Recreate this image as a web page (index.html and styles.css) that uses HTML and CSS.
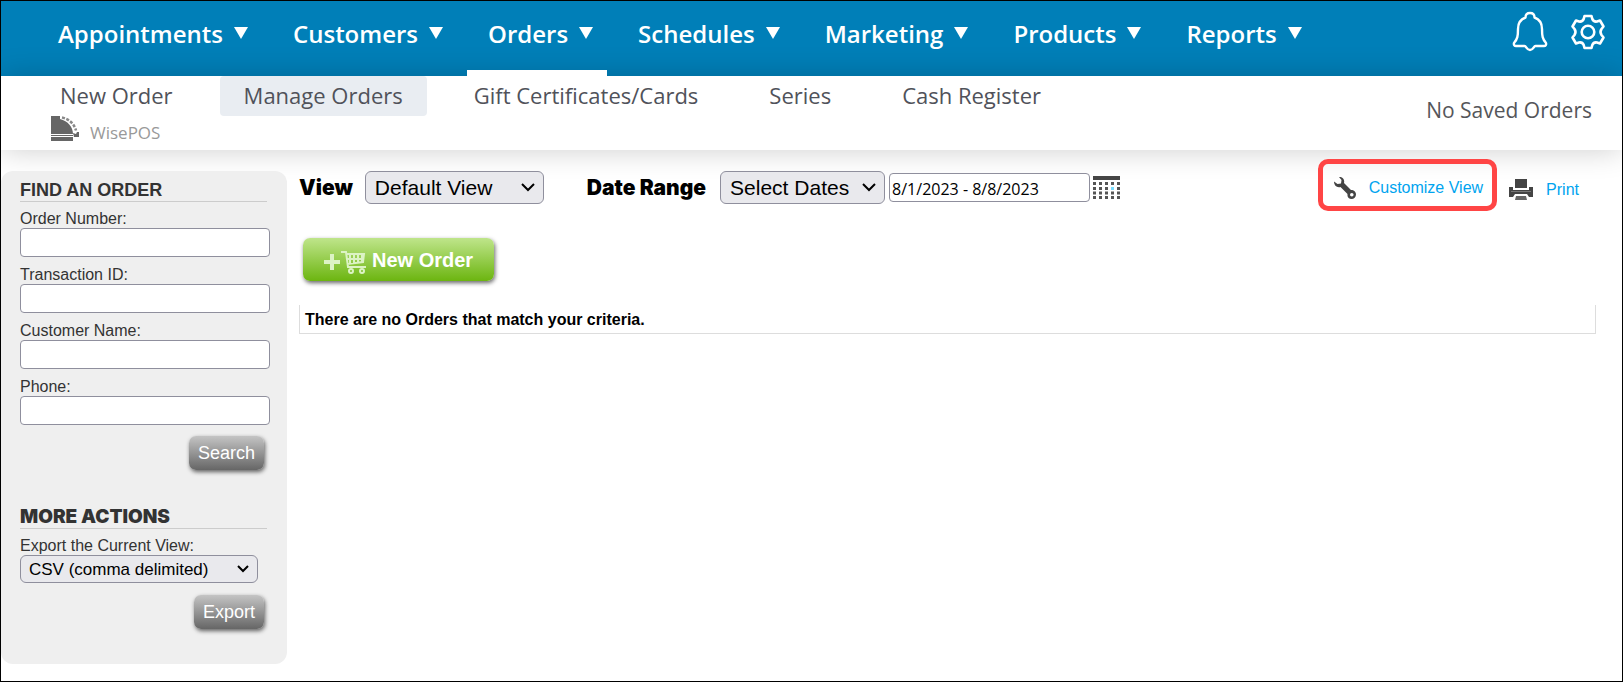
FILE: index.html
```html
<!doctype html>
<html lang="en">
<head>
    <meta charset="UTF-8">
    <title>Manage Orders</title>
    <link rel="stylesheet" href="styles.css">
</head>
<body>
<nav class="main-nav">
    <ul class="menu">
        <li><a href="#">Appointments <span class="arrow"></span></a></li>
        <li><a href="#">Customers <span class="arrow"></span></a></li>
        <li class="active"><a href="#">Orders <span class="arrow"></span></a></li>
        <li><a href="#">Schedules <span class="arrow"></span></a></li>
        <li><a href="#">Marketing <span class="arrow"></span></a></li>
        <li><a href="#">Products <span class="arrow"></span></a></li>
        <li><a href="#">Reports <span class="arrow"></span></a></li>
    </ul>
    <div class="nav-icons">
        <button type="button" aria-label="Notifications">
            <svg width="36" height="42" viewBox="0 0 36 42" fill="none" stroke="#fff" stroke-width="2.4" stroke-linejoin="round" stroke-linecap="round">
                <path d="M13.5 6.5C13.500 3.500 15 2 18 2s4.500 1.500 4.500 4.500C28 8.500 30 13 30 18c0 7 .5 10 4 14 .5 2-.5 3-2 3h-8.500c-2 0-2 4-5.500 4s-3.500-4-5.500-4H4c-1.500 0-2.500-1-2-3 3.500-4 4-7 4-14 0-5 2-9.500 7.500-11.500z"/>
            </svg>
        </button>
        <button type="button" aria-label="Settings">
            <svg width="36" height="36" viewBox="0 0 36 36" fill="none" stroke="#fff" stroke-width="2.6" stroke-linejoin="round">
                <path d="M14.500 2h7l.8 3Q23.500 8 27 7.500l3-1 3.500 6-2 2.500q-2 3 0 6l2 2.500-3.500 6-3-1q-3.500-.5-4.700 2.500l-.8 3h-7l-.8-3Q12.500 28 9 28.500l-3 1-3.500-6 2-2.500q2-3 0-6l-2-2.500 3.500-6 3 1Q12.500 8 13.700 5z"/>
                <circle cx="18" cy="18" r="6.300"/>
            </svg>
        </button>
    </div>
</nav>

<header class="sub-nav">
    <div>
        <ul class="sub-menu">
            <li><a href="#">New Order</a></li>
            <li><a href="#" class="current">Manage Orders</a></li>
            <li><a href="#">Gift Certificates/Cards</a></li>
            <li><a href="#">Series</a></li>
            <li><a href="#">Cash Register</a></li>
        </ul>
        <div class="wisepos">
            <svg width="29" height="26" viewBox="0 0 29 26" fill="#666">
                <path d="M0 0h9v3c8 2 13 8 13 15H0z"/>
                <path d="M11 1.500c7 1.500 12 6 14 13" fill="none" stroke="#888" stroke-width="2.500" stroke-dasharray="3 1.500"/>
                <path d="M0 19h22v1H0zM0 21h22v4H0zM22 17l3 1 1-2h2v5h-5z"/>
            </svg>
            <span>WisePOS</span>
        </div>
    </div>
    <div class="saved-orders">No Saved Orders</div>
</header>

<main class="page">
    <aside class="sidebar">
        <form>
            <h2>FIND AN ORDER</h2>
            <label for="orderNumber">Order Number:</label>
            <input id="orderNumber" type="text">
            <label for="transactionId">Transaction ID:</label>
            <input id="transactionId" type="text">
            <label for="customerName">Customer Name:</label>
            <input id="customerName" type="text">
            <label for="phone">Phone:</label>
            <input id="phone" type="text">
            <button type="button" class="grey-btn">Search</button>
        </form>
        <form class="more-actions">
            <h2 class="heavy">MORE ACTIONS</h2>
            <label for="exportType">Export the Current View:</label>
            <div class="select-box small">
                <select id="exportType">
                    <option>CSV (comma delimited)</option>
                </select>
                <svg width="12" height="8" viewBox="0 0 12 8" fill="none" stroke="#000" stroke-width="2"><path d="M1 1l5 5 5-5"/></svg>
            </div>
            <button type="button" class="grey-btn">Export</button>
        </form>
    </aside>

    <section class="content">
        <div class="toolbar">
            <label for="view" class="heavy">View</label>
            <div class="select-box view-select">
                <select id="view">
                    <option>Default View</option>
                </select>
                <svg width="14" height="9" viewBox="0 0 14 9" fill="none" stroke="#000" stroke-width="2"><path d="M1 1l6 6 6-6"/></svg>
            </div>
            <label for="dates" class="heavy date-label">Date Range</label>
            <div class="select-box date-select">
                <select id="dates">
                    <option>Select Dates</option>
                </select>
                <svg width="14" height="9" viewBox="0 0 14 9" fill="none" stroke="#000" stroke-width="2"><path d="M1 1l6 6 6-6"/></svg>
            </div>
            <input class="date-input" type="text" value="8/1/2023 - 8/8/2023" aria-label="Dates">
            <button type="button" class="calendar" aria-label="Open calendar">
                <svg width="28" height="24" viewBox="0 0 28 24">
                    <path d="M0 0h27v4H0z" fill="#444"/>
                    <path d="M0 7.500h28M0 12.500h28M0 17h28M0 21.500h28" stroke="#555" stroke-width="3" stroke-dasharray="3 3"/>
                    <path d="M18 11h3v3h-3z" fill="#7df"/>
                </svg>
            </button>
            <div class="tools">
                <a href="#" class="customize">
                    <svg width="22" height="22" viewBox="0 0 22 22">
                        <path d="M5 0c3-.5 6 2 5 6l7 7c3 0 5 2 5 4.500S20 22 17.500 22 13 20 13.500 17L6.500 10C3 11 0 8.500 0 4.500L3.500 7 7 6.500 7.500 3z" fill="#444"/>
                        <circle cx="17.800" cy="17.700" r="1.800" fill="#fff"/>
                    </svg>
                    Customize View
                </a>
                <a href="#" class="print">
                    <svg width="24" height="22" viewBox="0 0 24 22" fill="#444">
                        <path d="M6 0h12v9H6z"/>
                        <path d="M0 8h4v3h16V8h4v10h-4l-2-3H6l-2 3H0z"/>
                        <path d="M7 17h10l1 4H6z" fill="#666"/>
                        <path d="M2 12h20v1H2z" fill="#777"/>
                    </svg>
                    Print
                </a>
            </div>
        </div>

        <button type="button" class="new-order">
            <svg width="44" height="28" viewBox="0 -4 44 28" fill="none" stroke="#dcf3c4" stroke-width="2">
                <path d="M1 12h16M9 4v16" stroke-width="4"/>
                <path d="M18 2h5l2 15h18M23 4h18l-1 8-16 2M27 4v9M31 4v9M35 4v8M39 4v8M24 9h16"/>
                <circle cx="28" cy="21" r="2"/>
                <circle cx="39" cy="21" r="2"/>
            </svg>
            New Order
        </button>

        <table class="orders">
            <tr>
                <td>There are no Orders that match your criteria.</td>
            </tr>
        </table>
    </section>
</main>
</body>
</html>
```
FILE: styles.css
```css
* {
    box-sizing: border-box;
}

body {
    margin: 0;
    min-height: 100vh;
    border: 1px solid #000;
    font-family: "Liberation Sans", Arial, sans-serif;
    font-size: 16px;
    background-color: #fff;
}

ul {
    margin: 0;
    padding: 0;
    list-style: none;
}

a {
    text-decoration: none;
}

button {
    border: none;
    cursor: pointer;
    font-family: inherit;
}

svg {
    display: block;
    flex: none;
}

.main-nav {
    display: flex;
    justify-content: space-between;
    height: 75px;
    padding: 0 16px 0 36px;
    background-color: #007fb8;
    font-family: "Open Sans", sans-serif;
}

.menu {
    display: flex;
    gap: 10px;
}

.menu li {
    padding: 0 14px 5px 21px;
    border-bottom: 6px solid transparent;
}

.menu .active {
    border-bottom-color: #fff;
}

.menu a {
    display: flex;
    align-items: center;
    gap: 11px;
    height: 64px;
    color: #fff;
    font-size: 24px;
    font-weight: 600;
}

.arrow {
    border: 7px solid transparent;
    border-top: 12px solid #fff;
    border-bottom: 0;
}

.nav-icons {
    display: flex;
    gap: 22px;
    height: 62px;
    align-items: center;
}

.nav-icons button {
    padding: 0;
    background: none;
}

.sub-nav {
    display: flex;
    justify-content: space-between;
    height: 74px;
    padding: 0 30px 0 35px;
    background-color: #fff;
    box-shadow: 0 0 30px rgba(0, 0, 0, 0.2);
    font-family: "Open Sans", sans-serif;
    color: #55565a;
}

.main-nav, .sub-nav {
    white-space: nowrap;
}

.sub-menu {
    display: flex;
    gap: 23px;
}

.sub-menu a {
    display: block;
    padding: 0 24px 2px;
    border-radius: 4px;
    font-size: 22px;
    font-weight: 500;
    line-height: 38px;
    color: #50525a;
}

.sub-menu .current {
    background-color: #e9edf2;
}

.wisepos {
    display: flex;
    gap: 10px;
    padding-left: 15px;
    font-size: 17px;
    line-height: 34px;
    color: #999;
}

.saved-orders {
    font-size: 21px;
    line-height: 69px;
}

.page {
    display: flex;
    gap: 12px;
    padding: 21px 26px 17px 0;
}

.sidebar {
    flex: none;
    width: 286px;
    padding: 8px 17px 35px 19px;
    border-radius: 12px;
    background-color: #efefef;
    color: #333;
}

.sidebar form {
    display: flex;
    flex-direction: column;
}

.sidebar h2 {
    margin: 0 3px 8px 0;
    border-bottom: 1px solid #ccc;
    font-size: 18px;
    line-height: 22px;
}

.sidebar label {
    font-size: 16px;
    line-height: 18px;
}

.sidebar input {
    height: 29px;
    margin-bottom: 9px;
}

input, select {
    border: 1px solid #8f8f9d;
    border-radius: 4px;
    background-color: #fff;
    color: #000;
}

.grey-btn {
    align-self: flex-end;
    height: 34px;
    margin: 2px 6px 0 0;
    padding: 0 9px;
    border-radius: 7px;
    background: linear-gradient(#c4c4c4, #666);
    box-shadow: 1px 2px 4px rgba(0, 0, 0, 0.6);
    color: #fff;
    font-size: 18px;
}

.sidebar .more-actions {
    margin-top: 36px;
}

.heavy, .sidebar .heavy {
    font-family: Inter, sans-serif;
    font-weight: 900;
}

.sidebar .heavy {
    font-size: 19px;
}

.select-box {
    display: grid;
    align-items: center;
}

.select-box select, .select-box svg {
    grid-area: 1 / 1;
}

.select-box svg {
    justify-self: end;
    margin-right: 9px;
    pointer-events: none;
}

.select-box select {
    appearance: none;
    width: 100%;
    height: 33px;
    padding: 0 9px;
    border-radius: 6px;
    background-color: #e9e9ed;
    font-family: inherit;
    font-size: 21px;
}

.sidebar .small {
    width: 238px;
    margin-bottom: 10px;
}

.small select {
    height: 28px;
    padding: 0 8px;
    font-size: 17px;
}

.view-select {
    width: 179px;
}

.date-select {
    width: 165px;
}

.content {
    flex: 1;
}

.toolbar {
    display: flex;
    align-items: center;
    height: 33px;
    white-space: nowrap;
}

.toolbar .heavy {
    margin-right: 12px;
    font-size: 21px;
}

.toolbar .date-label {
    margin: 0 14px 0 43px;
}

.date-input {
    width: 201px;
    height: 29px;
    margin-left: 4px;
    padding: 2px 2px 0;
    font-family: "Open Sans", sans-serif;
    font-size: 16px;
}

.calendar {
    margin-left: 3px;
    padding: 0;
    background: none;
}

.tools {
    display: flex;
    align-items: center;
    gap: 12px;
    margin-left: auto;
    margin-right: 17px;
}

.tools a {
    display: flex;
    align-items: center;
    gap: 13px;
    padding-top: 4px;
    color: #00a4ef;
    font-size: 16px;
}

/* highlighted link, taller than the toolbar row */
.tools .customize {
    height: 52px;
    margin: -15px 0 -9px;
    padding: 6px 9px 0 11px;
    border: 5px solid #ff4545;
    border-radius: 10px;
}

.new-order {
    display: flex;
    align-items: center;
    gap: 5px;
    height: 43px;
    margin: 34px 0 24px 4px;
    padding: 1px 21px 0 20px;
    border-radius: 7px;
    background: linear-gradient(#bfe58b, #6cb510);
    box-shadow: 1px 2px 4px rgba(0, 0, 0, 0.6);
    color: #fff;
    font-size: 20px;
    font-weight: bold;
}

.orders {
    width: 100%;
    border: 1px solid #ddd;
    border-top: none;
    border-spacing: 0;
    font-size: 16px;
    font-weight: bold;
}

.orders td {
    padding: 6px 5px 4px;
}
```
